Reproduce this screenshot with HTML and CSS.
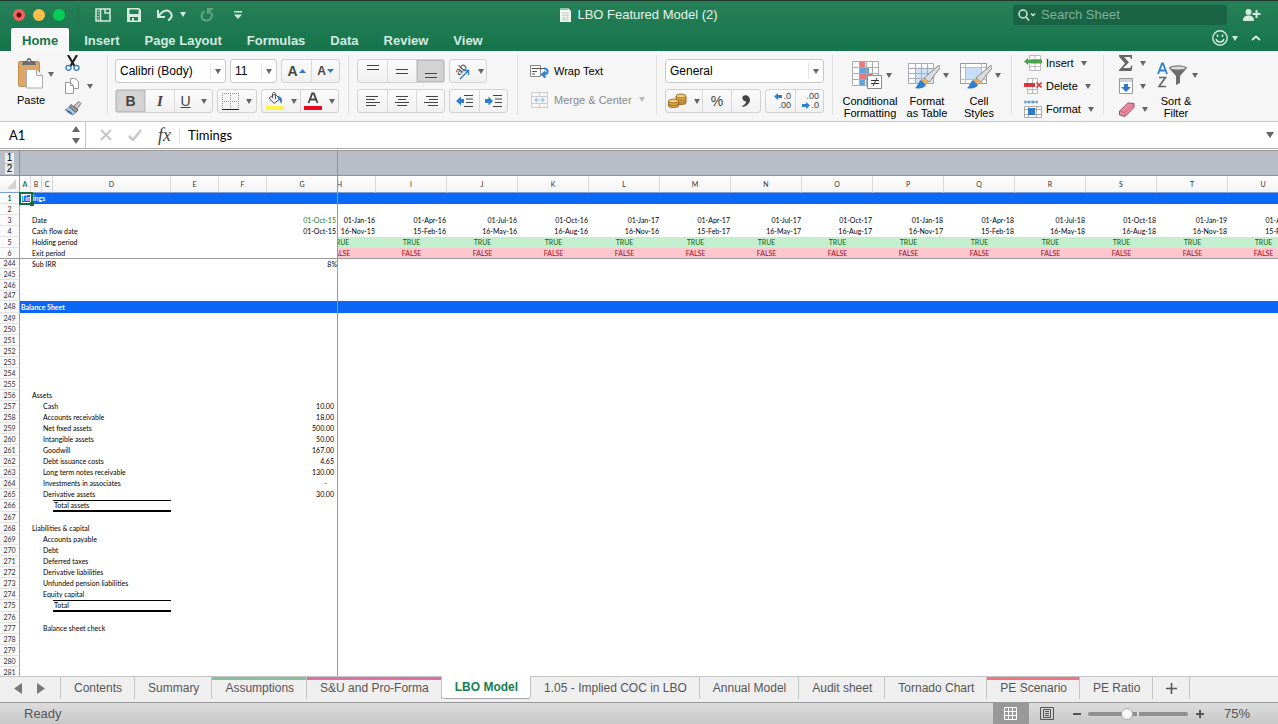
FILE: index.html
```html
<!DOCTYPE html>
<html lang="en">
<head>
    <meta charset="UTF-8">
    <meta name="viewport" content="width=device-width, initial-scale=1.0">
    <title>LBO Featured Model (2)</title>
    <link rel="stylesheet" href="styles.css">
</head>
<body>
    <header class="header">
        <div class="titlebar">
            <div class="quick">
                <span class="light red"></span><span class="light yellow"></span><span class="light green"></span>
                <span class="quick-line"></span>
                <button class="q-panel" aria-label="Gallery"><svg width="16" height="14" viewBox="0 0 16 14"><path d="M1 1h14v12H1zM5.500 1v12M10 1v4h5" fill="none" stroke="#d5ebe0" stroke-width="1.500"/><path d="M2.500 3.500h1.500M2.500 6h1.500M2.500 8.500h1.500M2.500 11h1.500" stroke="#d5ebe0"/></svg></button>
                <button class="q-save" aria-label="Save"><svg width="14" height="14" viewBox="0 0 14 14"><path d="M0 0h12l2 2v12H0zM2.500 1.500v4.500h9V1.500zM3 9v3.500h2V10h2v2.500h4V9z" fill="#d5ebe0" fill-rule="evenodd"/></svg></button>
                <button class="q-undo" aria-label="Undo"><svg width="16" height="12" viewBox="0 0 16 12"><path d="M1 1v7h7" fill="none" stroke="#d5ebe0" stroke-width="2"/><path d="M1.500 7.500C5 1.500 10 0 13 3s2 6-2 8.500" fill="none" stroke="#d5ebe0" stroke-width="2"/></svg></button>
                <span class="caret light-caret"></span>
                <button class="q-redo" aria-label="Repeat"><svg width="14" height="14" viewBox="0 0 14 14"><path d="M13 1H8v5" fill="none" stroke="#5fa584" stroke-width="2"/><path d="M8.500 2C12 5 13 8 10.500 10.800 8 13.500 3 13 1.800 9.500 1 6.500 2.500 4.500 4.500 3.500" fill="none" stroke="#5fa584" stroke-width="2"/></svg></button>
                <button class="q-more" aria-label="Customize toolbar"><svg width="8" height="8" viewBox="0 0 8 8"><path d="M0 0h8v1.500H0zM0 3.500h8L4 8z" fill="#d5ebe0"/></svg></button>
            </div>
            <div class="doc-title">
                <svg width="11" height="14" viewBox="0 0 11 14"><path d="M0 0h8l3 3v11H0z" fill="#f3f7f4"/><path d="M0 0h8v2H0z" fill="#8fc59f"/><path d="M1.500 5h8M1.500 7.500h8M1.500 10h8M1.500 12h8M4 4v9M7 4v9" stroke="#c0cfc5" stroke-width=".8"/></svg>
                <h1>LBO Featured Model (2)</h1>
            </div>
            <div class="title-right">
                <label class="search">
                    <svg width="18" height="12" viewBox="0 0 18 12"><circle cx="5" cy="5" r="4" fill="none" stroke="#d5ebe0" stroke-width="1.500"/><path d="M8 8l3 3.500M13 4.500l2 2 2-2" fill="none" stroke="#d5ebe0" stroke-width="1.500"/></svg>
                    <input type="text" placeholder="Search Sheet" aria-label="Search Sheet">
                </label>
                <button class="share" aria-label="Share"><svg width="18" height="12" viewBox="0 0 18 12"><circle cx="5.500" cy="3" r="3" fill="#d5ebe0"/><path d="M0 12c0-4 2-5.500 5.500-5.500S11 8 11 12zM9.500 4h8v2h-8z" fill="#d5ebe0"/><path d="M12.500 1h2v8h-2z" fill="#d5ebe0"/></svg></button>
            </div>
        </div>
        <nav class="menu">
            <button class="active">Home</button>
            <button>Insert</button>
            <button>Page Layout</button>
            <button>Formulas</button>
            <button>Data</button>
            <button>Review</button>
            <button>View</button>
            <div class="menu-right">
                <button aria-label="Feedback"><svg width="16" height="16" viewBox="0 0 16 16"><circle cx="8" cy="8" r="7.200" fill="none" stroke="#d5ebe0" stroke-width="1.400"/><path d="M5.500 4.500v2.500M10.500 4.500v2.500" stroke="#d5ebe0" stroke-width="1.600"/><path d="M4 9c1 4 7 4 8 0" fill="none" stroke="#d5ebe0" stroke-width="1.400"/></svg></button>
                <span class="caret light-caret"></span>
                <button class="collapse" aria-label="Collapse ribbon"><svg width="10" height="6" viewBox="0 0 10 6"><path d="M1 5l4-3.500L9 5" fill="none" stroke="#d5ebe0" stroke-width="2"/></svg></button>
            </div>
        </nav>
    </header>

    <section class="ribbon">
        <div class="group clipboard">
            <button class="paste">
                <svg width="26" height="31" viewBox="0 0 26 31"><rect x="0.500" y="3.500" width="21" height="25" rx="1.500" fill="#dca869" stroke="#c18e50"/><path d="M5 3h3.500c0-4 5-4 5 0H17l1 4H4z" fill="#6d6d6d"/><circle cx="11" cy="2.800" r="1" fill="#eee"/><path d="M8.500 11.500h10l6 6v12.500h-16z" fill="#fff" stroke="#aaa"/><path d="M18.500 11.500v6h6" fill="#eee" stroke="#aaa"/></svg>
                <span>Paste</span>
            </button>
            <span class="caret"></span>
            <div class="clip-tools">
                <button aria-label="Cut"><svg width="15" height="16" viewBox="0 0 15 16"><path d="M3 0l6.500 11M12 0L5.500 11" stroke="#222" stroke-width="2.200"/><circle cx="3.500" cy="12.800" r="2.500" fill="none" stroke="#2f78c4" stroke-width="1.300"/><circle cx="11.500" cy="12.800" r="2.500" fill="none" stroke="#2f78c4" stroke-width="1.300"/></svg></button>
                <button aria-label="Copy"><svg width="15" height="16" viewBox="0 0 15 16"><path d="M5.500.5h5l3 3v7h-8z" fill="#fff" stroke="#999"/><path d="M.5 4.500h5l3 3v8h-8zM5.500 4.500v3h3" fill="#fff" stroke="#999"/></svg><span class="caret"></span></button>
                <button aria-label="Format painter"><svg width="17" height="14" viewBox="0 0 17 14"><path d="M9 5l5-4.500 2 2L12 8z" fill="#ccc" stroke="#777"/><path d="M6 3.500L13 9l-2 2.500L4.500 5.500z" fill="#999" stroke="#666"/><path d="M4 6l6.500 5.500L8 14C5 13 2 11 0 8.500 2 8.500 3 7.500 4 6z" fill="#aecbea" stroke="#666" stroke-width=".7"/><path d="M1 9l3 .5L6 11l2 2.500C5 13 2.500 11 1 9z" fill="#2c73bf"/></svg></button>
            </div>
        </div>

        <div class="group font">
            <div class="line">
                <label class="combo family"><select aria-label="Font"><option>Calibri (Body)</option></select><span class="caret"></span></label>
                <label class="combo size"><select aria-label="Font size"><option>11</option></select><span class="caret"></span></label>
                <div class="buttons">
                    <button class="b29 grow-font" aria-label="Increase font size">A<svg width="7" height="4" viewBox="0 0 7 4"><path d="M0 4L3.500 0 7 4z" fill="#2f78c4"/></svg></button>
                    <button class="b28 shrink-font" aria-label="Decrease font size">A<svg width="7" height="4" viewBox="0 0 7 4"><path d="M0 0h7L3.500 4z" fill="#2f78c4"/></svg></button>
                </div>
            </div>
            <div class="line">
                <div class="buttons">
                    <button class="b29 bold on">B</button>
                    <button class="b29 italic">I</button>
                    <button class="b38 underline"><u>U</u><span class="caret"></span></button>
                </div>
                <div class="buttons">
                    <button class="b38" aria-label="Borders"><svg width="17" height="17" viewBox="0 0 17 17"><path d="M.5 0v16M8.500 0v16M16.500 0v16M0 .5h17M0 8.500h17" fill="none" stroke="#999" stroke-dasharray="1 1"/><path d="M0 16.500h17" stroke="#222"/></svg><span class="caret"></span></button>
                </div>
                <div class="buttons">
                    <button class="b38" aria-label="Fill color"><svg width="18" height="18" viewBox="0 0 18 18"><path d="M3 6l6-4 5 5-6 4.500z" fill="#eee" stroke="#555"/><path d="M6.500 6V2c0-2 3-2 3 0v5" fill="none" stroke="#555"/><path d="M12 4c4 1 5 4 3 8-1-3-1-4-3-5z" fill="#2f78c4"/><path d="M0 14h18v4H0z" fill="#fbf34a"/></svg><span class="caret"></span></button>
                    <button class="b38" aria-label="Font color"><svg width="18" height="18" viewBox="0 0 18 18"><path d="M4.500 11L8.200 1.500h1.600L13.500 11M6 7.500h6" fill="none" stroke="#444" stroke-width="1.800"/><path d="M0 14h18v4H0z" fill="#e8061b"/></svg><span class="caret"></span></button>
                </div>
            </div>
        </div>

        <div class="group align">
            <div class="line">
                <div class="buttons">
                    <button class="b29" aria-label="Top align"><svg width="16" height="16" viewBox="0 0 16 16"><path d="M2 2.500h12M2 6.500h12" stroke="#444"/></svg></button>
                    <button class="b29" aria-label="Middle align"><svg width="16" height="16" viewBox="0 0 16 16"><path d="M2 6.500h12M2 10.500h12" stroke="#444"/></svg></button>
                    <button class="b28 on" aria-label="Bottom align"><svg width="16" height="16" viewBox="0 0 16 16"><path d="M2 10.500h12M2 14.500h12" stroke="#444"/></svg></button>
                </div>
                <div class="buttons">
                    <button class="b36" aria-label="Orientation"><svg class="orient" width="18" height="18" viewBox="0 0 18 18"><text x="0" y="0" transform="translate(6 14) rotate(-45)" class="ab">ab</text><path d="M7 17l8-8M11 8.500h4.500V13" fill="none" stroke="#2f78c4" stroke-width="1.300"/></svg><span class="caret"></span></button>
                </div>
            </div>
            <div class="line">
                <div class="buttons">
                    <button class="b29" aria-label="Align left"><svg width="16" height="16" viewBox="0 0 16 16"><path d="M1 3.500h12M1 6.500h9M1 9.500h14M1 12.500h10" stroke="#444"/></svg></button>
                    <button class="b29" aria-label="Center"><svg width="16" height="16" viewBox="0 0 16 16"><path d="M2 3.500h12M4 6.500h8M1 9.500h14M3 12.500h10" stroke="#444"/></svg></button>
                    <button class="b28" aria-label="Align right"><svg width="16" height="16" viewBox="0 0 16 16"><path d="M3 3.500h12M6 6.500h9M1 9.500h14M5 12.500h10" stroke="#444"/></svg></button>
                </div>
                <div class="buttons">
                    <button class="b29" aria-label="Decrease indent"><svg width="18" height="14" viewBox="0 0 18 14"><path d="M8 1.500h9M10 5h7M10 8.500h7M8 12.500h9" stroke="#444"/><path d="M0 7l5-4.500v2.500h3v4H5v2.500z" fill="#2f7fd0"/></svg></button>
                    <button class="b28" aria-label="Increase indent"><svg width="18" height="14" viewBox="0 0 18 14"><path d="M8 1.500h9M10 5h7M10 8.500h7M8 12.500h9" stroke="#444"/><path d="M8 7L3.500 2.500v2.500H0v4h3.500v2.500z" fill="#2f7fd0"/></svg></button>
                </div>
            </div>
        </div>

        <div class="group wrap">
            <button class="text-button"><svg width="20" height="14" viewBox="0 0 20 14"><path d="M.5 1.500h10v11H.5z" fill="#fff" stroke="#888"/><path d="M2 4.500h13M2 7.500h5M2 10h3" stroke="#555"/><path d="M14 4.500c5 0 5 6-1 6M15.500 7.500L12 10.500l3.500 3" fill="none" stroke="#2f7fd0" stroke-width="2"/></svg>Wrap Text</button>
            <button class="text-button disabled"><svg width="20" height="16" viewBox="0 0 20 16"><path d="M1.500.5h16v15h-16zM1.500 4.500h16M1.500 11.500h16M9.500.5v4M9.500 11.500v4" fill="none" stroke="#ccc"/><path d="M5 8h9M7 6L5 8l2 2M12 6l2 2-2 2" fill="none" stroke="#9cc3e8" stroke-width="1.200"/></svg>Merge &amp; Center<span class="caret"></span></button>
        </div>

        <div class="group number">
            <div class="line">
                <label class="combo format"><select aria-label="Number format"><option>General</option></select><span class="caret"></span></label>
            </div>
            <div class="line">
                <div class="buttons">
                    <button class="b36" aria-label="Accounting format"><svg width="19" height="16" viewBox="0 0 19 16"><g fill="#e5a642" stroke="#8a5a1c" stroke-width=".8"><path d="M8 3v7c0 2 10 2 10 0V3z"/><ellipse cx="13" cy="3" rx="5" ry="2" fill="#f4cb79"/><path d="M8 6c0 2 10 2 10 0M8 8.500c0 2 10 2 10 0" fill="none"/><path d="M.5 8v5c0 2 10 2 10 0V8z"/><ellipse cx="5.500" cy="8" rx="5" ry="2" fill="#f4cb79"/><path d="M.5 11c0 2 10 2 10 0" fill="none"/></g></svg><span class="caret"></span></button>
                    <button class="b29 percent">%</button>
                    <button class="b29" aria-label="Comma style"><svg width="8" height="12" viewBox="0 0 8 12"><path d="M1 1c4-2 7 1 7 4s-3 6-7 7l-1-1c3-1 4-3 4-5-2 1-5-3-3-5z" fill="#444"/></svg></button>
                </div>
                <div class="buttons">
                    <button class="b29 decimals" aria-label="Increase decimal"><span><svg width="8" height="7" viewBox="0 0 8 7"><path d="M0 3.500L4 0v2h4v3H4v2z" fill="#2f7fd0"/></svg>.0</span><span>.00</span></button>
                    <button class="b28 decimals" aria-label="Decrease decimal"><span>.00</span><span><svg width="8" height="7" viewBox="0 0 8 7"><path d="M8 3.500L4 0v2H0v3h4v2z" fill="#2f7fd0"/></svg>.0</span></button>
                </div>
            </div>
        </div>

        <div class="group styles">
            <button class="big cond"><span class="big-icon"><svg width="31" height="30" viewBox="0 0 31 30"><path d="M.5 1.500h26v24H.5z" fill="#fff"/><path d="M8 1h5v6H8zM8 13h12v6H8z" fill="#e87a7c"/><path d="M8 7h9v6H8zM8 19h5v6H8z" fill="#5ca3e0"/><path d="M.5 1.500h26v24H.5zM7.500 1.500v24M14.500 1.500v24M20.500 1.500v24M.5 7.500h26M.5 13.500h26M.5 19.500h26" fill="none" stroke="#aaa"/><path d="M15.500 15.500h14v13h-14z" fill="#fff" stroke="#888"/><path d="M19 20.500h8M19 23.500h8M25 18l-4 8" stroke="#333"/></svg><span class="caret"></span></span>Conditional<br>Formatting</button>
            <button class="big"><span class="big-icon"><svg width="32" height="30" viewBox="0 0 32 30"><path d="M.5 3.500h25v20H.5z" fill="#fff"/><path d="M7 9h19v15H7z" fill="#cfe4f6"/><path d="M.5 3.500h25v20H.5zM7.500 3.500v20M13.500 3.500v20M19.500 3.500v20M.5 8.500h25M.5 13.500h25M.5 18.500h25" fill="none" stroke="#aab"/><path d="M16 18L30 6c2-1 3 0 2 2L21 22z" fill="#ddd" stroke="#888"/><path d="M15 18l6 4-3 3-5-4z" fill="#f0b15b"/><path d="M13 20l5 5c-3 4-7 4-11 3 3-2 3-6 6-8z" fill="#2f7fd0"/></svg><span class="caret"></span></span>Format<br>as Table</button>
            <button class="big"><span class="big-icon"><svg width="32" height="30" viewBox="0 0 32 30"><path d="M.5 3.500h26v20H.5z" fill="#fff" stroke="#999"/><path d="M5 8h17v12H5z" fill="#c5ddf5"/><path d="M5.500 3.500v20M21.500 3.500v20M.5 7.500h26M.5 19.500h26" fill="none" stroke="#bbc"/><path d="M16 18L30 6c2-1 3 0 2 2L21 22z" fill="#ddd" stroke="#888"/><path d="M15 18l6 4-3 3-5-4z" fill="#f0b15b"/><path d="M13 20l5 5c-3 4-7 4-11 3 3-2 3-6 6-8z" fill="#2f7fd0"/></svg><span class="caret"></span></span>Cell<br>Styles</button>
        </div>

        <div class="group cells">
            <button class="text-button"><svg width="18" height="16" viewBox="0 0 18 16"><path d="M5.500.5h11v15h-11zM11 .5v15M5.500 4.500h11M5.500 11.500h11" fill="#fff" stroke="#bbb"/><path d="M0 6.500L4 3v2h3v3H4v2zM7 4.500h11v4H7z" fill="#48a54c"/></svg>Insert<span class="caret"></span></button>
            <button class="text-button"><svg width="18" height="16" viewBox="0 0 18 16"><path d="M3.500.5h10v15h-10zM8.500.5v15M3.500 11.500h10" fill="#fff" stroke="#bbb"/><path d="M0 5h11v4H0z" fill="#d9363a"/><path d="M12.500 4.500l5 5M17.500 4.500l-5 5" stroke="#d9363a" stroke-width="1.600"/></svg>Delete<span class="caret"></span></button>
            <button class="text-button"><svg width="18" height="18" viewBox="0 0 18 18"><path d="M1 .5v3M13 .5v3M1 2h12M5 .5v3M9 .5v3" stroke="#2f7fd0"/><path d="M.5 6.500h17v11H.5zM4.500 6.500v11M12.500 6.500v11M.5 9.500h17M.5 14.500h17" fill="#fff" stroke="#aaa"/><path d="M4 8h7v7H4z" fill="#2f78c4"/></svg>Format<span class="caret"></span></button>
        </div>

        <div class="group editing">
            <div class="edit-tools">
                <button aria-label="AutoSum"><svg width="14" height="16" viewBox="0 0 14 16"><path d="M0 0h13v4h-1l-1-2H5l5 5.500L4 13h7l1.500-2.500h1L12.500 16H0v-1l6-6.500L0 1.500z" fill="#666"/></svg><span class="caret"></span></button>
                <button aria-label="Fill"><svg width="14" height="16" viewBox="0 0 14 16"><path d="M.5.500h13v15H.5z" fill="#fff" stroke="#999"/><path d="M1 1h12v3H1z" fill="#ccd3da"/><path d="M5 6h4v3h3l-5 5-5-5h3z" fill="#2f78c4"/></svg><span class="caret"></span></button>
                <button aria-label="Clear"><svg width="16" height="15" viewBox="0 0 16 15"><path d="M9 1l6 .5v4L6 14.500l-5.500-1.500V9z" fill="#e98ba0" stroke="#a44f62"/><path d="M.5 9L6 10.500V14M6 10.500L15 1.500" fill="none" stroke="#c46a7e"/></svg><span class="caret"></span></button>
            </div>
            <button class="big"><span class="big-icon"><svg width="32" height="26" viewBox="0 0 32 26"><path d="M1 12L5 1.500h1L10 12M2.500 8.500h6" fill="none" stroke="#2f7fd0" stroke-width="1.800"/><path d="M2 15.500h6.500L2 24.500h7" fill="none" stroke="#666" stroke-width="1.600"/><path d="M12 6c0-3 18-3 18 0l-7 8v7l-4 2v-9z" fill="#6d6d6d"/><ellipse cx="21" cy="6" rx="8" ry="2" fill="#ddd" stroke="#777"/></svg><span class="caret"></span></span>Sort &amp;<br>Filter</button>
        </div>
    </section>

    <section class="formula">
        <div class="name-box">
            <input type="text" value="A1" aria-label="Name box">
            <svg width="8" height="18" viewBox="0 0 8 18"><path d="M0 6l4-6 4 6zM0 12h8l-4 6z" fill="#666"/></svg>
        </div>
        <button aria-label="Cancel"><svg width="12" height="12" viewBox="0 0 12 12"><path d="M1 1l10 10M11 1L1 11" stroke="#c6c6c6" stroke-width="2"/></svg></button>
        <button aria-label="Enter"><svg width="14" height="12" viewBox="0 0 14 12"><path d="M1 7l4 4 8-10" fill="none" stroke="#c6c6c6" stroke-width="2.500"/></svg></button>
        <button class="fx">fx</button>
        <input class="formula-text" type="text" value="Timings" aria-label="Formula">
        <span class="caret big-caret"></span>
    </section>

    <main class="sheet">
        <div class="outline">
            <div class="levels"><button>1</button><button>2</button></div>
            <div class="outline-frozen"></div>
        </div>
        <table class="grid">
            <colgroup>
                <col class="c-head"><col class="c-s"><col class="c-s"><col class="c-s"><col class="c-d"><col class="c-e"><col class="c-e"><col class="c-m"><col class="c-h"><col class="c-m" span="13">
            </colgroup>
            <thead>
                <tr><th class="corner"><svg width="9" height="10" viewBox="0 0 9 10"><path d="M9 0v10H0z" fill="#d3d3d3"/></svg></th><th class="sel">A</th><th>B</th><th>C</th><th>D</th><th>E</th><th>F</th><th class="frz">G</th><th><div class="cut"><span>H</span></div></th><th>I</th><th>J</th><th>K</th><th>L</th><th>M</th><th>N</th><th>O</th><th>P</th><th>Q</th><th>R</th><th>S</th><th>T</th><th>U</th></tr>
            </thead>
            <tbody>
                <tr class="section"><th class="sel">1</th><td class="cursor">Timings<span class="cursor-box"></span></td><td colspan="5"></td><td class="frz"></td><td colspan="14"></td></tr>
                <tr><th>2</th><td colspan="6"></td><td class="frz"></td><td colspan="14"></td></tr>
                <tr class="dates"><th>3</th><td></td><td class="label">Date</td><td colspan="4"></td><td class="frz link">01-Oct-15</td><td>01-Jan-16</td><td>01-Apr-16</td><td>01-Jul-16</td><td>01-Oct-16</td><td>01-Jan-17</td><td>01-Apr-17</td><td>01-Jul-17</td><td>01-Oct-17</td><td>01-Jan-18</td><td>01-Apr-18</td><td>01-Jul-18</td><td>01-Oct-18</td><td>01-Jan-19</td><td>01-Apr-19</td></tr>
                <tr class="dates"><th>4</th><td></td><td class="label">Cash flow date</td><td colspan="4"></td><td class="frz">01-Oct-15</td><td>16-Nov-15</td><td>15-Feb-16</td><td>16-May-16</td><td>16-Aug-16</td><td>16-Nov-16</td><td>15-Feb-17</td><td>16-May-17</td><td>16-Aug-17</td><td>16-Nov-17</td><td>15-Feb-18</td><td>16-May-18</td><td>16-Aug-18</td><td>16-Nov-18</td><td>15-Feb-19</td></tr>
                <tr class="flags true"><th>5</th><td></td><td class="label">Holding period</td><td colspan="4"></td><td class="frz"></td><td class="flag"><div class="cut"><span>TRUE</span></div></td><td class="flag">TRUE</td><td class="flag">TRUE</td><td class="flag">TRUE</td><td class="flag">TRUE</td><td class="flag">TRUE</td><td class="flag">TRUE</td><td class="flag">TRUE</td><td class="flag">TRUE</td><td class="flag">TRUE</td><td class="flag">TRUE</td><td class="flag">TRUE</td><td class="flag">TRUE</td><td class="flag">TRUE</td></tr>
                <tr class="flags false"><th>6</th><td></td><td class="label">Exit period</td><td colspan="4"></td><td class="frz"></td><td class="flag"><div class="cut"><span>FALSE</span></div></td><td class="flag">FALSE</td><td class="flag">FALSE</td><td class="flag">FALSE</td><td class="flag">FALSE</td><td class="flag">FALSE</td><td class="flag">FALSE</td><td class="flag">FALSE</td><td class="flag">FALSE</td><td class="flag">FALSE</td><td class="flag">FALSE</td><td class="flag">FALSE</td><td class="flag">FALSE</td><td class="flag">FALSE</td></tr>
                <tr class="first"><th>244</th><td></td><td class="label">Sub IRR</td><td colspan="4"></td><td class="frz pct">8%</td><td colspan="14"></td></tr>
                <tr><th>245</th><td colspan="6"></td><td class="frz"></td><td colspan="14"></td></tr>
                <tr><th>246</th><td colspan="6"></td><td class="frz"></td><td colspan="14"></td></tr>
                <tr class="first"><th>247</th><td colspan="6"></td><td class="frz"></td><td colspan="14"></td></tr>
                <tr class="section tall"><th>248</th><td>Balance Sheet</td><td colspan="5"></td><td class="frz"></td><td colspan="14"></td></tr>
                <tr><th>249</th><td colspan="6"></td><td class="frz"></td><td colspan="14"></td></tr>
                <tr><th>250</th><td colspan="6"></td><td class="frz"></td><td colspan="14"></td></tr>
                <tr><th>251</th><td colspan="6"></td><td class="frz"></td><td colspan="14"></td></tr>
                <tr><th>252</th><td colspan="6"></td><td class="frz"></td><td colspan="14"></td></tr>
                <tr><th>253</th><td colspan="6"></td><td class="frz"></td><td colspan="14"></td></tr>
                <tr><th>254</th><td colspan="6"></td><td class="frz"></td><td colspan="14"></td></tr>
                <tr><th>255</th><td colspan="6"></td><td class="frz"></td><td colspan="14"></td></tr>
                <tr><th>256</th><td></td><td class="label">Assets</td><td colspan="4"></td><td class="frz"></td><td colspan="14"></td></tr>
                <tr><th>257</th><td colspan="2"></td><td class="label">Cash</td><td colspan="3"></td><td class="frz">10.00</td><td colspan="14"></td></tr>
                <tr><th>258</th><td colspan="2"></td><td class="label">Accounts receivable</td><td colspan="3"></td><td class="frz">18.00</td><td colspan="14"></td></tr>
                <tr><th>259</th><td colspan="2"></td><td class="label">Net fixed assets</td><td colspan="3"></td><td class="frz">500.00</td><td colspan="14"></td></tr>
                <tr><th>260</th><td colspan="2"></td><td class="label">Intangible assets</td><td colspan="3"></td><td class="frz">50.00</td><td colspan="14"></td></tr>
                <tr><th>261</th><td colspan="2"></td><td class="label">Goodwill</td><td colspan="3"></td><td class="frz">167.00</td><td colspan="14"></td></tr>
                <tr><th>262</th><td colspan="2"></td><td class="label">Debt issuance costs</td><td colspan="3"></td><td class="frz">4.65</td><td colspan="14"></td></tr>
                <tr><th>263</th><td colspan="2"></td><td class="label">Long term notes receivable</td><td colspan="3"></td><td class="frz">130.00</td><td colspan="14"></td></tr>
                <tr><th>264</th><td colspan="2"></td><td class="label">Investments in associates</td><td colspan="3"></td><td class="frz nil">-</td><td colspan="14"></td></tr>
                <tr><th>265</th><td colspan="2"></td><td class="label">Derivative assets</td><td colspan="3"></td><td class="frz">30.00</td><td colspan="14"></td></tr>
                <tr class="tall"><th>266</th><td colspan="3"></td><td class="total">Total assets</td><td colspan="2"></td><td class="frz"></td><td colspan="14"></td></tr>
                <tr><th>267</th><td colspan="6"></td><td class="frz"></td><td colspan="14"></td></tr>
                <tr><th>268</th><td></td><td class="label">Liabilities &amp; capital</td><td colspan="4"></td><td class="frz"></td><td colspan="14"></td></tr>
                <tr><th>269</th><td colspan="2"></td><td class="label">Accounts payable</td><td colspan="3"></td><td class="frz"></td><td colspan="14"></td></tr>
                <tr><th>270</th><td colspan="2"></td><td class="label">Debt</td><td colspan="3"></td><td class="frz"></td><td colspan="14"></td></tr>
                <tr><th>271</th><td colspan="2"></td><td class="label">Deferred taxes</td><td colspan="3"></td><td class="frz"></td><td colspan="14"></td></tr>
                <tr><th>272</th><td colspan="2"></td><td class="label">Derivative liabilities</td><td colspan="3"></td><td class="frz"></td><td colspan="14"></td></tr>
                <tr><th>273</th><td colspan="2"></td><td class="label">Unfunded pension liabilities</td><td colspan="3"></td><td class="frz"></td><td colspan="14"></td></tr>
                <tr><th>274</th><td colspan="2"></td><td class="label">Equity capital</td><td colspan="3"></td><td class="frz"></td><td colspan="14"></td></tr>
                <tr class="tall"><th>275</th><td colspan="3"></td><td class="total">Total</td><td colspan="2"></td><td class="frz"></td><td colspan="14"></td></tr>
                <tr><th>276</th><td colspan="6"></td><td class="frz"></td><td colspan="14"></td></tr>
                <tr><th>277</th><td colspan="2"></td><td class="label">Balance sheet check</td><td colspan="3"></td><td class="frz"></td><td colspan="14"></td></tr>
                <tr><th>278</th><td colspan="6"></td><td class="frz"></td><td colspan="14"></td></tr>
                <tr><th>279</th><td colspan="6"></td><td class="frz"></td><td colspan="14"></td></tr>
                <tr><th>280</th><td colspan="6"></td><td class="frz"></td><td colspan="14"></td></tr>
                <tr><th>281</th><td colspan="6"></td><td class="frz"></td><td colspan="14"></td></tr>
            </tbody>
        </table>
    </main>

    <nav class="tabs">
        <div class="tab-arrows">
            <button aria-label="Previous sheet"><svg width="8" height="11" viewBox="0 0 8 11"><path d="M8 0v11L0 5.500z" fill="#777"/></svg></button>
            <button aria-label="Next sheet"><svg width="8" height="11" viewBox="0 0 8 11"><path d="M0 0v11l8-5.500z" fill="#777"/></svg></button>
        </div>
        <button class="tab">Contents</button>
        <button class="tab">Summary</button>
        <button class="tab mark-green">Assumptions</button>
        <button class="tab mark-pink">S&amp;U and Pro-Forma</button>
        <button class="tab current">LBO Model</button>
        <button class="tab">1.05 - Implied COC in LBO</button>
        <button class="tab">Annual Model</button>
        <button class="tab">Audit sheet</button>
        <button class="tab">Tornado Chart</button>
        <button class="tab mark-red">PE Scenario</button>
        <button class="tab">PE Ratio</button>
        <button class="tab add" aria-label="Add sheet"><svg width="11" height="11" viewBox="0 0 11 11"><path d="M5.500 0v11M0 5.500h11" stroke="#555" stroke-width="1.600"/></svg></button>
    </nav>

    <footer class="status">
        <span class="ready">Ready</span>
        <button class="view on" aria-label="Normal view"><svg width="13" height="13" viewBox="0 0 13 13"><path d="M.5.500h12v12H.5zM4.500.500v12M8.500.500v12M.5 4.500h12M.5 8.500h12" fill="none" stroke="#fff"/></svg></button>
        <button class="view" aria-label="Page layout view"><svg width="14" height="13" viewBox="0 0 14 13"><path d="M.5.500h13v12H.5zM3.500 2.500h7v8h-7zM5 4.500h4M5 6.500h4M5 8.500h4" fill="none" stroke="#555"/></svg></button>
        <button class="zoom-button" aria-label="Zoom out"><svg width="8" height="8" viewBox="0 0 8 8"><path d="M0 4h8" stroke="#555" stroke-width="2"/></svg></button>
        <input class="zoom" type="range" min="0" max="100" value="37" aria-label="Zoom">
        <button class="zoom-button" aria-label="Zoom in"><svg width="8" height="8" viewBox="0 0 8 8"><path d="M0 4h8M4 0v8" stroke="#555" stroke-width="2"/></svg></button>
        <span class="zoom-value">75%</span>
    </footer>
</body>
</html>
```
FILE: styles.css
```css
* {
    box-sizing: border-box;
}
body {
    margin: 0;
    height: 100vh;
    display: flex;
    flex-direction: column;
    overflow: hidden;
    background: #fff;
    font-family: "Liberation Sans", Arial, sans-serif;
    font-size: 13px;
    color: #000;
}
button {
    display: flex;
    align-items: center;
    margin: 0;
    padding: 0;
    border: none;
    background: none;
    font: inherit;
    color: inherit;
}
input, select {
    border: none;
    margin: 0;
    padding: 0;
    background: none;
    font: inherit;
    color: inherit;
    outline: none;
}
svg {
    display: block;
    flex: none;
}
.caret {
    flex: none;
    border: 3px solid transparent;
    border-top: 5px solid #666;
    border-bottom: none;
}
.light-caret {
    border-top-color: #d5ebe0;
}

/* title bar and menu */
.header {
    flex: none;
    border-top: 1px solid #1d3a2c;
    background: linear-gradient(#278058, #15744b);
    color: #d5ebe0;
}
.titlebar {
    display: grid;
    grid-template-columns: 1fr auto 1fr;
    align-items: center;
    height: 27px;
}
.quick {
    display: flex;
    align-items: center;
    padding-left: 13px;
}
.light {
    width: 12px;
    height: 12px;
    margin-right: 8px;
    border-radius: 50%;
}
.red {
    background: radial-gradient(circle, #5c0a08 2px, #f9605c 3px);
}
.yellow {
    background: #fdbe4b;
}
.green {
    background: #05cc54;
}
.quick-line {
    width: 1px;
    height: 16px;
    margin: 0 16px 0 5px;
    background: #1d7049;
}
.q-panel, .q-save {
    margin-right: 16px;
}
.q-undo {
    margin-right: 7px;
}
.q-redo {
    margin: 0 20px 0 14px;
}
.doc-title {
    display: flex;
    align-items: center;
    gap: 6px;
}
.doc-title h1 {
    margin: 0;
    font-size: 13px;
    font-weight: normal;
    color: #e6f3ec;
}
.title-right {
    display: flex;
    align-items: center;
    justify-content: flex-end;
    padding-right: 17px;
}
.search {
    display: flex;
    align-items: center;
    gap: 5px;
    width: 214px;
    height: 20px;
    margin-right: 16px;
    padding-left: 5px;
    border-radius: 3px;
    background: #1a6344;
}
.search input {
    min-width: 0;
    flex: 1;
}
.search input::placeholder {
    color: #7fb39b;
}
.menu {
    display: flex;
    height: 23px;
    padding-left: 11px;
    font-weight: bold;
}
.menu > button {
    margin-left: 4px;
    padding: 0 11px;
    height: 24px;
    border-radius: 2px 2px 0 0;
}
.menu > button + button {
    margin-right: -1px;
}
.menu .active {
    margin-left: 0;
    background: #f7f7f7;
    color: #15744b;
}
.menu-right {
    display: flex;
    align-items: center;
    gap: 4px;
    margin-left: auto;
    padding: 0 17px 3px 0;
}
.collapse {
    margin-left: 9px;
}

/* ribbon */
.ribbon {
    flex: none;
    display: flex;
    height: 71px;
    padding: 4px 0 6px;
    border-bottom: 1px solid #c6c6c6;
    background: #f6f6f6;
    font-size: 11px;
}
.group {
    flex: none;
    display: flex;
    flex-direction: column;
    padding: 4px 8px;
    gap: 6px;
    border-right: 1px solid #dedede;
}
.clipboard {
    flex-direction: row;
    align-items: flex-start;
    gap: 2px;
    width: 108px;
    padding: 0 0 0 15px;
}
.clipboard .paste {
    flex-direction: column;
    align-items: center;
    gap: 5px;
    width: 32px;
    padding-top: 3px;
}
.clipboard > .caret {
    margin: 17px 9px 0 -1px;
}
.clip-tools {
    display: flex;
    flex-direction: column;
    gap: 7px;
    width: 30px;
}
.clip-tools .caret {
    margin-left: 7px;
}
.line {
    display: flex;
    gap: 4px;
}
.combo {
    display: flex;
    align-items: center;
    height: 24px;
    padding: 0 4px;
    border: 1px solid #c8c8c8;
    border-radius: 3px;
    background: #fff;
}
.combo select {
    flex: 1;
    min-width: 0;
    height: 16px;
    margin-right: 4px;
    border-right: 1px solid #e4e4e4;
    appearance: none;
    font-size: 12px;
}
.family {
    width: 111px;
}
.size {
    width: 47px;
}
.format {
    width: 159px;
}
.buttons {
    display: flex;
    height: 24px;
    border: 1px solid #d2d2d2;
    border-radius: 3px;
    background: linear-gradient(#fbfbfb, #f1f1f1);
}
.buttons button {
    justify-content: center;
    color: #444;
}
.buttons button + button {
    border-left: 1px solid #dadada;
}
.buttons .on {
    background: #d4d4d4;
    box-shadow: inset 0 0 1px 1px #bbb;
}
.buttons .caret {
    margin-left: 7px;
}
.b28 {
    width: 28px;
}
.b29 {
    width: 29px;
}
.b36 {
    width: 36px;
}
.b38 {
    width: 38px;
}
.font {
    width: 241px;
    padding-left: 7px;
}
.grow-font, .shrink-font {
    gap: 1px;
    font-size: 14px;
    font-weight: bold;
}
.shrink-font {
    font-size: 12px;
}
.bold, .underline {
    font-size: 14px;
    font-weight: bold;
}
.underline {
    font-weight: normal;
}
.underline .caret {
    margin-left: 10px;
}
.italic {
    font-family: "Liberation Serif", serif;
    font-size: 15px;
    font-weight: bold;
    font-style: italic;
}
.orient {
    overflow: visible;
}
.ab {
    font-size: 11px;
    fill: #444;
}
.percent {
    font-size: 14px;
}
.decimals {
    flex-direction: column;
    align-items: flex-end;
    padding: 0 4px;
    font-size: 9px;
    line-height: 9px;
}
.decimals span {
    display: flex;
    align-items: center;
    gap: 1px;
}
.align {
    width: 169px;
}
.text-button {
    gap: 4px;
    height: 24px;
    white-space: nowrap;
}
.text-button .caret {
    margin-left: 3px;
}
.wrap {
    width: 139px;
    padding-left: 12px;
}
.number {
    width: 176px;
}
.disabled {
    color: #8a8a8a;
}
.disabled .caret {
    border-top-color: #bbb;
}
.styles {
    flex-direction: row;
    align-items: flex-start;
    gap: 2px;
    width: 179px;
    padding: 4px 7px;
}
.big {
    flex-direction: column;
    width: 50px;
    line-height: 12px;
}
.big-icon {
    display: flex;
    align-items: center;
    gap: 3px;
    height: 32px;
    margin: 0 -3px 4px 0;
}
.cond {
    width: 60px;
}
.cells {
    width: 92px;
    padding: 0 12px;
    gap: 7px;
}
.cells .text-button {
    height: 16px;
}
.editing {
    flex-direction: row;
    align-items: flex-start;
    gap: 3px;
    padding: 0 15px;
    border-right: none;
}
.edit-tools {
    display: flex;
    flex-direction: column;
    gap: 7px;
}
.edit-tools button {
    gap: 7px;
    height: 16px;
}
.editing .big {
    padding-top: 4px;
}

/* formula bar */
.formula {
    flex: none;
    display: flex;
    align-items: center;
    gap: 16px;
    height: 27px;
    padding-right: 4px;
    border-bottom: 1px solid #aaa;
    font-family: Lato, sans-serif;
}
.name-box {
    display: flex;
    align-items: center;
    width: 86px;
    height: 26px;
    padding: 0 5px 0 9px;
    border-right: 1px solid #c8c8c8;
}
.name-box input {
    flex: 1;
    min-width: 0;
}
.name-box + button {
    margin-left: -2px;
}
.fx {
    height: 15px;
    padding-right: 8px;
    border-right: 1px solid #ddd;
    font-family: "Liberation Serif", serif;
    font-size: 18px;
    font-style: italic;
    color: #444;
}
.formula-text {
    flex: 1;
    margin-left: -8px;
}
.big-caret {
    border-width: 6px 4px 0;
}

/* worksheet */
.sheet {
    flex: 1;
    min-height: 0;
    overflow: hidden;
    padding-top: 1px;
}
.outline {
    display: flex;
    height: 26px;
    border-top: 1px solid #999;
    border-bottom: 1px solid #8f8f95;
    background: #b9bdc8;
}
.levels {
    display: flex;
    flex-direction: column;
    align-items: center;
    justify-content: center;
    gap: 1px;
    width: 20px;
    border-right: 1px solid #8f8f95;
}
.levels button {
    padding: 0 2px;
    background: #eee;
    font-size: 10px;
    line-height: 10px;
}
.outline-frozen {
    width: 318px;
    border-right: 1px solid #8f8f95;
}
.grid {
    width: 1299px;
    table-layout: fixed;
    border-collapse: separate;
    border-spacing: 0;
    font-family: Lato, sans-serif;
    font-size: 7px;
    line-height: 9px;
}
.c-head {
    width: 20px;
}
.c-s {
    width: 11px;
}
.c-d {
    width: 118px;
}
.c-e {
    width: 48px;
}
.c-m {
    width: 71px;
}
.c-h {
    width: 38px;
}
.grid th, .grid td {
    height: 11px;
    padding: 0;
    white-space: nowrap;
    text-align: left;
}
.grid td {
    line-height: 10px;
    vertical-align: top;
}
.grid th {
    border-right: 1px solid #a0a0a0;
    border-bottom: 1px solid #e2e2e2;
    background: #fafafa;
    font-weight: normal;
    text-align: center;
    color: #333;
}
.grid thead th {
    height: 17px;
    border-right-color: #d9d9d9;
    border-bottom-color: #7f9fd0;
    background: linear-gradient(#fff, #f3f3f3);
}
.grid thead .corner {
    padding-left: 7px;
    border-right-color: #a0a0a0;
}
.grid .sel {
    color: #15744b;
    font-weight: bold;
}
.grid .frz {
    padding-right: 3px;
    border-right: 1px solid #999;
    text-align: right;
}
.grid thead .frz {
    padding-right: 0;
    border-right-color: #999;
    text-align: center;
}
.grid .label, .grid .total {
    padding-left: 1px;
}
.grid .dates td:not(.label) {
    padding-right: 1px;
    text-align: right;
}
.grid .pct {
    padding-right: 0;
}
.grid .nil {
    padding-right: 10px;
}
.link {
    color: #1c7a2c;
}
.grid .section td {
    background: #0b68f6;
    color: #fff;
    font-weight: bold;
    padding-left: 1px;
}
.grid .flag {
    text-align: center;
}
.true .flag {
    background: #c3efce;
    color: #126312;
}
.false .flag {
    background: #fec6cd;
    color: #9a0d1c;
}
.grid .false td, .grid .false th {
    border-bottom: 1px solid #999;
}
.cut {
    display: flex;
    justify-content: flex-end;
    overflow: hidden;
}
.cut span {
    flex: none;
    width: 71px;
    text-align: center;
}
.grid .first th, .grid .first td {
    height: 10px;
}
.grid .tall th, .grid .tall td {
    height: 12px;
}
.grid .section.tall td {
    line-height: 12px;
}
.grid .total {
    border-top: 1px solid #000;
    border-bottom: 2px solid #000;
    line-height: 9px;
}
.cursor {
    position: relative;
}
.cursor-box {
    position: absolute;
    top: -1px;
    left: -1px;
    width: 14px;
    height: 13px;
    border: 2px solid #12703f;
    outline: 1px solid #fff;
    outline-offset: -3px;
}
.cursor-box::after {
    content: "";
    position: absolute;
    right: -3px;
    bottom: -3px;
    width: 4px;
    height: 4px;
    background: #12703f;
}

/* sheet tabs */
.tabs {
    flex: none;
    display: flex;
    height: 26px;
    border-top: 1px solid #c4c4c4;
    background: #efefef;
    font-size: 12px;
    color: #555;
}
.tab-arrows {
    display: flex;
    align-items: center;
    gap: 15px;
    width: 61px;
    height: 22px;
    padding-left: 14px;
    border-right: 1px solid #c4c4c4;
}
.tab {
    height: 22px;
    padding: 0 12px 0 13px;
    border-right: 1px solid #c4c4c4;
    white-space: nowrap;
}
.mark-green {
    box-shadow: inset 0 3px #86c19a;
}
.mark-pink {
    box-shadow: inset 0 3px #dd70a5;
}
.mark-red {
    box-shadow: inset 0 3px #ef7580;
}
.current {
    margin-top: -1px;
    height: 23px;
    background: #fff;
    border-bottom: 1px solid #aaa;
    border-radius: 0 0 3px 3px;
    color: #15804f;
    font-weight: bold;
}

/* status bar */
.status {
    flex: none;
    display: flex;
    align-items: center;
    height: 22px;
    padding-right: 28px;
    border-top: 1px solid #999;
    background: linear-gradient(#dcdcdc, #c8c8c8);
    color: #555;
}
.ready {
    margin-right: auto;
    padding-left: 24px;
}
.view {
    justify-content: center;
    width: 36px;
    height: 21px;
}
.status .on {
    background: #999;
}
.zoom-button {
    margin-left: 8px;
}
.zoom {
    width: 100px;
    height: 12px;
    margin: 0 0 0 7px;
    appearance: none;
}
.zoom::-webkit-slider-runnable-track {
    height: 4px;
    border-radius: 2px;
    background: linear-gradient(90deg, #8f8f8f 49px, #ddd 49px, #ddd 51px, #8f8f8f 51px);
}
.zoom::-webkit-slider-thumb {
    width: 12px;
    height: 12px;
    margin-top: -4px;
    border: 1px solid #aaa;
    border-radius: 50%;
    background: #fafafa;
    appearance: none;
}
.zoom-value {
    margin-left: 20px;
}
```
